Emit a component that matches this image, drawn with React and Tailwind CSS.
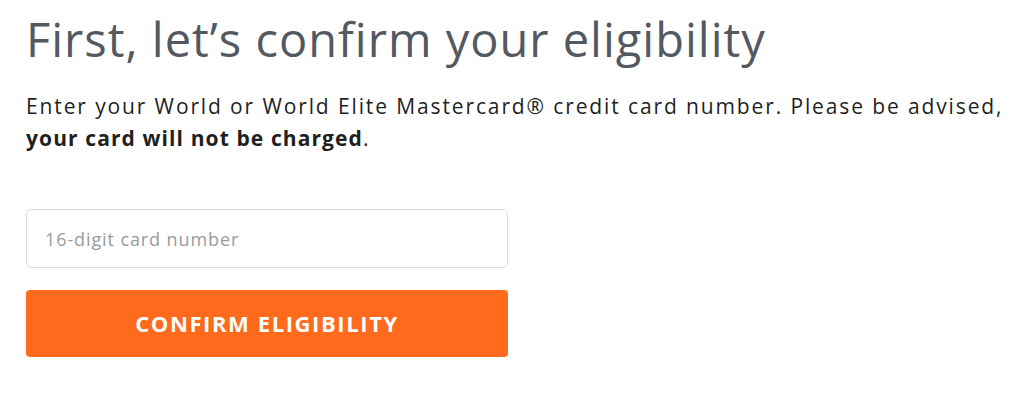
import React, { useState } from 'react';

export default function App() {
  const [cardNumber, setCardNumber] = useState('');

  return (
    <div className="w-full min-h-[404px] bg-white pl-[26px] pr-[10px] pt-[9px]" style={{ fontFamily: '"Open Sans", "Noto Sans", sans-serif' }}>
      {/* heading */}
      <h1 className="text-[47px] leading-[60px] font-normal text-[#545961] tracking-[1px]">
        First, let’s confirm your eligibility
      </h1>

      {/* intro */}
      <p className="mt-[21px] text-[21px] leading-[32px] text-[#1f1f1f] tracking-[1.88px]">
        <span className="whitespace-nowrap">
          Enter your World or World Elite Mastercard® credit card number. Please be advised,
        </span>
        <br />
        <strong className="font-bold tracking-[1.1px]">your card will not be charged</strong>.
      </p>

      {/* form */}
      <form className="mt-[55px] w-[482px] flex flex-col gap-[22px]" onSubmit={e => e.preventDefault()}>
        <input
          type="text"
          value={cardNumber}
          onChange={e => setCardNumber(e.target.value)}
          placeholder="16-digit card number"
          className="h-[59px] w-full rounded-[5px] border border-[#dcdcdc] px-[18px] text-[18px] tracking-[0.9px] text-[#333] placeholder:text-[#9a9a9a] outline-none"
        />
        <button
          type="submit"
          className="h-[67px] w-full rounded-[4px] bg-[#ff6a1c] text-white text-[22px] font-bold tracking-[1.6px] uppercase"
        >
          Confirm Eligibility
        </button>
      </form>
    </div>
  );
}
